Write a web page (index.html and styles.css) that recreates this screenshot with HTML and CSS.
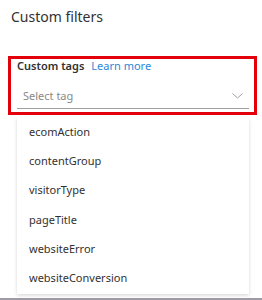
FILE: index.html
```html
<!DOCTYPE html>
<html lang="en">
<head>
    <meta charset="UTF-8">
    <title>Custom filters</title>
    <link rel="stylesheet" href="styles.css">
</head>
<body>
    <div class="panel">
        <h2 class="panel-title">Custom filters</h2>

        <div class="highlight">
            <div class="field-label">
                <span class="label-text">Custom tags</span>
                <a class="learn-more" href="#">Learn more</a>
            </div>
            <div class="select">
                <span class="placeholder">Select tag</span>
                <svg class="chevron" width="11" height="6" viewBox="0 0 11 6">
                    <polyline points="0.5 0.5, 5.5 5, 10.5 0.5" fill="none" stroke="#a19f9d" stroke-width="1"/>
                </svg>
            </div>
        </div>

        <ul class="dropdown">
            <li>ecomAction</li>
            <li>contentGroup</li>
            <li>visitorType</li>
            <li>pageTitle</li>
            <li>websiteError</li>
            <li>websiteConversion</li>
        </ul>

        <div class="bottom-rule"></div>
    </div>
</body>
</html>
```

FILE: styles.css
```css
body {
    margin: 0;
    padding: 0;
    background: #ffffff;
    font-family: "Noto Sans", "Open Sans", sans-serif;
    color: #323130;
}

.panel {
    width: 262px;
    height: 300px;
    display: flex;
    flex-direction: column;
    overflow: hidden;
}

.panel-title {
    margin: 0;
    padding: 7px 0 0 11px;
    height: 56px;
    box-sizing: border-box;
    font-size: 14px;
    line-height: 19px;
    font-weight: 400;
    color: #323130;
}

.highlight {
    margin-left: 8px;
    width: 249px;
    height: 59px;
    box-sizing: border-box;
    border: 3px solid #e3000b;
    padding: 0 5px 0 6px;
}

.field-label {
    display: flex;
    gap: 7px;
    height: 14px;
    line-height: 14px;
    font-size: 11px;
}

.label-text {
    font-weight: 600;
    color: #323130;
}

.learn-more {
    color: #2b88d8;
    text-decoration: none;
}

.select {
    display: flex;
    align-items: center;
    justify-content: space-between;
    height: 14px;
    padding: 16px 6px 5px;
    border-bottom: 1px solid #a19f9d;
}

.placeholder {
    font-size: 11px;
    line-height: 14px;
    color: #8a8886;
}

.chevron {
    display: block;
}

.dropdown {
    list-style: none;
    margin: 2px 0 0 17px;
    padding: 0 0 2px;
    width: 232px;
    background: #ffffff;
    box-shadow: 0 1.6px 3.6px rgba(0, 0, 0, 0.16), 0 0.3px 0.9px rgba(0, 0, 0, 0.12);
}

.dropdown li {
    height: 29.2px;
    line-height: 29px;
    padding-left: 12px;
    font-size: 11px;
    color: #323130;
}

.bottom-rule {
    margin-top: auto;
    height: 2px;
    background: #9e9aa6;
}
```
